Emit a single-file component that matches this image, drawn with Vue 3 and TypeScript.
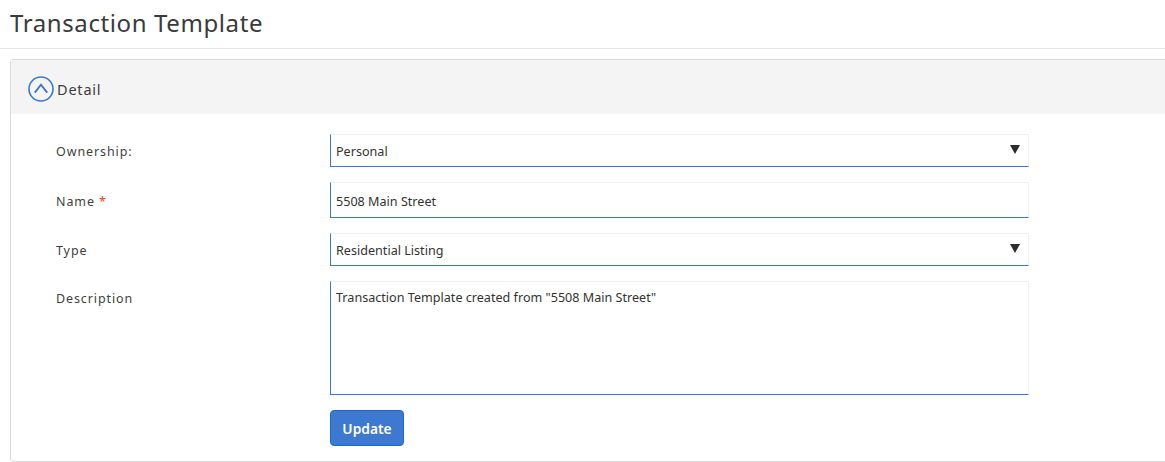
<script setup lang="ts">
import { ref } from 'vue'

const ownership = ref('Personal')
const name = ref('5508 Main Street')
const type = ref('Residential Listing')
const description = ref('Transaction Template created from "5508 Main Street"')
</script>

<template>
  <div class="page">
    <header class="page-head">
      <h1>Transaction Template</h1>
    </header>
    <section class="panel">
      <div class="panel-head">
        <svg class="toggle" width="26" height="26" viewBox="0 0 26 26" fill="none">
          <circle cx="13" cy="13" r="12" stroke="#3a76d2" stroke-width="1.6" />
          <path d="M6.8 16.6 L13 8.6 L19.2 16.6" stroke="#3f72c9" stroke-width="1.8" />
        </svg>
        <span class="panel-title">Detail</span>
      </div>
      <form class="form" @submit.prevent>
        <div class="row row-select">
          <label>Ownership:</label>
          <div class="select">
            <select v-model="ownership">
              <option>Personal</option>
              <option>Office</option>
            </select>
            <span class="arrow"></span>
          </div>
        </div>
        <div class="row row-input">
          <label>Name <em>*</em></label>
          <input v-model="name" type="text" />
        </div>
        <div class="row row-select">
          <label>Type</label>
          <div class="select">
            <select v-model="type">
              <option>Residential Listing</option>
              <option>Commercial Listing</option>
            </select>
            <span class="arrow"></span>
          </div>
        </div>
        <div class="row row-text">
          <label>Description</label>
          <textarea v-model="description"></textarea>
        </div>
        <div class="row row-button">
          <span></span>
          <button type="submit">Update</button>
        </div>
      </form>
    </section>
  </div>
</template>

<style>
html, body {
  margin: 0;
  background: #fff;
  overflow: hidden;
}
</style>

<style scoped>
.page {
  width: 1165px;
  height: 462px;
  font-family: "Noto Sans", "Open Sans", sans-serif;
  color: #333;
  overflow: hidden;
}
.page-head {
  height: 48px;
  border-bottom: 1px solid #e4e4e4;
  padding-left: 10px;
  margin-bottom: 10px;
}
h1 {
  margin: 0;
  padding-top: 6px;
  font-size: 24px;
  line-height: 33px;
  font-weight: 400;
  letter-spacing: 0.6px;
  color: #3a3a3a;
}
.panel {
  margin-left: 10px;
  width: 1165px;
  height: 403px;
  box-sizing: border-box;
  border: 1px solid #dcdcdc;
  border-radius: 3px;
}
.panel-head {
  height: 54px;
  box-sizing: border-box;
  background: #f4f4f4;
  display: flex;
  align-items: center;
  padding: 3px 0 0 17px;
  gap: 3px;
}
.toggle {
  display: block;
}
.panel-title {
  font-size: 14.5px;
  letter-spacing: 0.8px;
  color: #3d3d3d;
}
.form {
  padding-top: 20px;
}
.row {
  display: grid;
  grid-template-columns: 274px 699px;
  padding-left: 45px;
  margin-bottom: 15px;
  font-size: 12px;
}
label {
  letter-spacing: 0.9px;
  color: #3f3f3f;
  font-size: 12.5px;
  line-height: 17px;
}
.row-select label {
  padding-top: 9px;
}
.row-input label {
  padding-top: 11px;
}
.row-text label {
  padding-top: 9px;
}
em {
  font-style: normal;
  color: #e8392a;
}
.select {
  position: relative;
  height: 33px;
}
select,
input,
textarea {
  display: block;
  width: 100%;
  box-sizing: border-box;
  margin: 0;
  border: 1px solid #eef0fa;
  border-left: 1px solid #3a76d2;
  border-bottom: 1px solid #3a76d2;
  border-radius: 0;
  background: #fff;
  padding: 0 5px;
  font: 12.6px/17px "Noto Sans", "Open Sans", sans-serif;
  color: #333;
  outline: none;
}
select {
  height: 33px;
  padding-top: 2px;
  appearance: none;
}
input {
  height: 36px;
  padding-top: 2px;
}
textarea {
  height: 114px;
  padding-top: 7px;
  resize: none;
  overflow: hidden;
}
.arrow {
  position: absolute;
  right: 9px;
  top: 11px;
  width: 0;
  height: 0;
  border-left: 5px solid transparent;
  border-right: 5px solid transparent;
  border-top: 9px solid #2c2c2c;
  pointer-events: none;
}
button {
  width: 74px;
  height: 36px;
  box-sizing: border-box;
  background: #3d79d0;
  border: 1px solid #1a6ad6;
  border-radius: 4px;
  color: #fff;
  font: 600 13.8px/20px "Noto Sans", "Open Sans", sans-serif;
  padding: 2px 0 0;
}
</style>
